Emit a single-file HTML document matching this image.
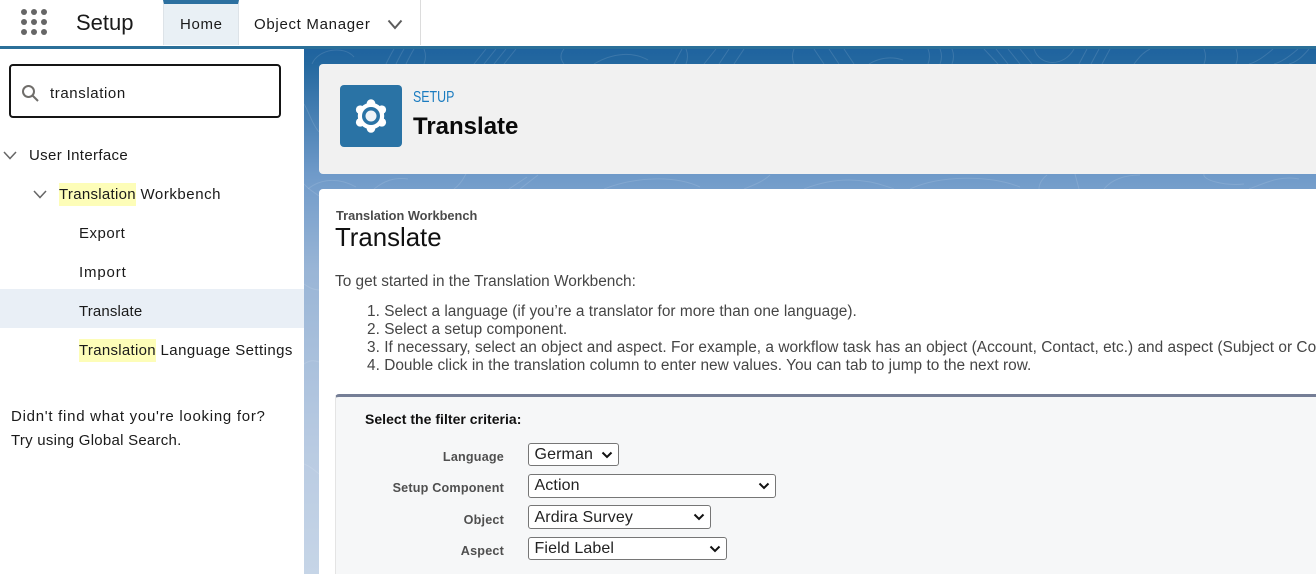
<!DOCTYPE html>
<html><head><meta charset="utf-8"><title>Translate</title>
<style>
html,body{margin:0;padding:0;width:1316px;height:574px;overflow:hidden;background:#fff}
#p{position:absolute;left:0;top:0;width:1316px;height:574px;overflow:hidden;background:#fff;font-family:"Liberation Sans",sans-serif;color:#181818}
.a{position:absolute;white-space:nowrap}
.nav{font-size:15px;line-height:20px;letter-spacing:.35px;color:#1a1a1a}
.hl{background:#fdfdb8;padding:3px 0}
.b{font-size:15.4px;line-height:18px;color:#454545}
.lab{font-size:12.6px;font-weight:bold;color:#4f4f4f;line-height:14px;text-align:right;right:0;letter-spacing:.2px}
.sel{position:absolute;box-sizing:border-box;background:#fff;border:1px solid #767676;border-radius:3px;font-size:16px;line-height:20px;color:#222;padding-left:5.5px;letter-spacing:.12px;white-space:nowrap}
.sel svg{position:absolute;top:50%;margin-top:-4px}
</style></head><body><div id="p">

<!-- Top bar -->
<svg class="a" style="left:20px;top:8px" width="28" height="28" viewBox="0 0 28 28" fill="#666">
<circle cx="4" cy="4" r="3"/><circle cx="14" cy="4" r="3"/><circle cx="24" cy="4" r="3"/>
<circle cx="4" cy="14" r="3"/><circle cx="14" cy="14" r="3"/><circle cx="24" cy="14" r="3"/>
<circle cx="4" cy="24" r="3"/><circle cx="14" cy="24" r="3"/><circle cx="24" cy="24" r="3"/></svg>
<div class="a" style="left:76px;top:8px;font-size:22px;line-height:30px;color:#1a1a1a">Setup</div>
<div class="a" style="left:163px;top:0;width:76px;height:45px;box-sizing:border-box;background:#e9f0f5;border-top:4px solid #2c70a0;border-left:1px solid #dde3e8;border-right:1px solid #dde3e8"></div>
<div class="a nav" style="left:180px;top:15px;letter-spacing:.65px">Home</div>
<div class="a nav" style="left:254px;top:15px;letter-spacing:.7px">Object Manager</div>
<svg class="a" style="left:387px;top:19px" width="16" height="11" viewBox="0 0 16 11" fill="none" stroke="#5c5c5c" stroke-width="2"><path d="M1.500 1.500 8 9l6.500-7.500"/></svg>
<div class="a" style="left:420px;top:0;width:1px;height:45px;background:#dcdcdc"></div>
<div class="a" style="left:0;top:46px;width:1316px;height:3px;background:#2b7099"></div>

<!-- Sidebar -->
<div class="a" style="left:9px;top:64px;width:272px;height:54px;box-sizing:border-box;border:2px solid #151515;border-radius:4px;background:#fff"></div>
<svg class="a" style="left:21px;top:84px" width="18" height="18" viewBox="0 0 18 18" fill="none" stroke="#706e6b" stroke-width="2"><circle cx="7.500" cy="7.500" r="5.500"/><path d="M11.500 11.500 17 17"/></svg>
<div class="a nav" style="left:50px;top:84px;letter-spacing:.6px">translation</div>

<svg class="a" style="left:3px;top:151px" width="14" height="9" viewBox="0 0 14 9" fill="none" stroke="#666" stroke-width="1.500"><path d="M1 1l6 6.500L13 1"/></svg>
<div class="a nav" style="left:29px;top:146px">User Interface</div>
<svg class="a" style="left:33px;top:190px" width="14" height="9" viewBox="0 0 14 9" fill="none" stroke="#666" stroke-width="1.500"><path d="M1 1l6 6.500L13 1"/></svg>
<div class="a nav" style="left:59px;top:185px"><span class="hl" style="letter-spacing:.3px">Translation</span> <span style="letter-spacing:.55px">Workbench</span></div>
<div class="a nav" style="left:79px;top:224px;letter-spacing:.5px">Export</div>
<div class="a nav" style="left:79px;top:263px;letter-spacing:.85px">Import</div>
<div class="a" style="left:0;top:289px;width:304px;height:39px;background:#e9eff6"></div>
<div class="a nav" style="left:79px;top:302px;letter-spacing:.15px">Translate</div>
<div class="a nav" style="left:79px;top:341px;letter-spacing:.42px"><span class="hl" style="letter-spacing:.3px">Translation</span> Language Settings</div>
<div class="a nav" style="left:11px;top:407px;letter-spacing:.73px">Didn't find what you're looking for?</div>
<div class="a nav" style="left:11px;top:431px;letter-spacing:.25px">Try using Global Search.</div>

<!-- Main background -->
<div class="a" style="left:304px;top:49px;width:1012px;height:525px;background:linear-gradient(180deg,#1f639f 0,#24689f 15px,#6f9ac9 125px,#99b5d6 220px,#b9cbe2 400px,#c6d5e7 525px)"></div>
<svg class="a" style="left:304px;top:49px" width="1012" height="141" viewBox="0 0 1012 141" fill="none" stroke="#fff" stroke-opacity=".12" stroke-width="1">
<path d="M8 15C14 0 40-4 50 8M82 15c3-6 6-12 8-15M92 15c3-6 6-12 8-15M102 15c3-6 6-12 8-15M120 15c2-5 2-10 0-15M170 15l12-15M180 15l12-15M190 15l12-15M200 15l12-15M260 15c-4-5-4-10 0-15M290 15c20-12 40-12 54-4M370 15l8-15M382 15c2-5 2-10 0-15M400 15l12-15M415 15l10-15M430 15l10-15M490 15c-2-5-2-10 0-15M520 15l-10-15M535 15l-10-15M550 15l-10-15M565 15c10-6 22-8 34-4M624 0c2 5 2 10 0 15M636 15c2-5 2-10 0-15M648 15c2-5 2-10 0-15M680 0l14 15M692 0l12 15M704 0l12 15M716 0l12 15M730 0c6 18 30 18 40 0M775 15l8-15M787 15l8-15M798 15l8-15M830 15c6-8 10-12 16-15M900 15c2-5 2-10 0-15M932 0c2 5 2 10 0 15M945 15c8-2 16-8 24-15M970 15c8-2 16-8 24-15M985 15c8-2 14-8 20-15"/>
<path d="M4 140c12-10 30-12 48-2M70 140c10-8 20-12 34-10M150 140c8-6 10-12 12-15M205 140l18-12M216 140l18-14M300 140c30-12 70-14 96-2M440 140c10-4 20-8 26-14M500 140c30-12 60-12 90 0M606 140c30-14 80-14 110-2M735 140c0-5 3-10 8-14M775 140l-4-15M800 140c8-10 22-14 36-14M900 125c-2 6 20 12 40 10M945 140c16-6 32-14 50-10"/></svg>
<svg class="a" style="left:304px;top:64px" width="15" height="510" viewBox="0 0 15 510" fill="none" stroke="#fff" stroke-opacity=".12" stroke-width="1">
<path d="M0 40c6 10 8 20 15 28M0 120c5 6 10 8 15 12M0 220c6 4 10 6 15 6M0 300c6-4 10-4 15-2M0 400c6 2 10 6 15 10"/></svg>

<!-- Header card -->
<div class="a" style="left:319px;top:64px;width:1010px;height:110px;background:#f1f1f1;border-radius:4px"></div>
<div class="a" style="left:340px;top:85px;width:62px;height:62px;background:#2a73a5;border-radius:4px"></div>
<svg class="a" style="left:354px;top:98px" width="34" height="36" viewBox="0 0 34 36">
<g fill="#fff"><circle cx="17" cy="18" r="13.200"/>
<circle cx="17" cy="5.500" r="4.300"/><circle cx="17" cy="30.500" r="4.300"/>
<circle cx="6.200" cy="11.700" r="4.300"/><circle cx="27.800" cy="11.700" r="4.300"/>
<circle cx="6.200" cy="24.300" r="4.300"/><circle cx="27.800" cy="24.300" r="4.300"/></g>
<circle cx="17" cy="18" r="9" fill="#2a73a5"/><circle cx="17" cy="18" r="5.500" fill="#eef3f7"/></svg>
<div class="a" style="left:413px;top:89px;font-size:15.500px;line-height:18px;color:#1b7cc0;transform:scaleX(.8);transform-origin:left center">SETUP</div>
<div class="a" style="left:413px;top:112px;font-size:24px;line-height:30px;font-weight:bold;color:#0a0a0a">Translate</div>

<!-- Content card -->
<div class="a" style="left:319px;top:189px;width:1010px;height:400px;background:#fff;border-radius:4px"></div>
<div class="a" style="left:336px;top:209px;font-size:12.800px;line-height:14px;font-weight:bold;color:#4a4a4a">Translation Workbench</div>
<div class="a" style="left:335px;top:222px;font-size:25.800px;line-height:32px;color:#111">Translate</div>
<div class="a b" style="left:335px;top:273px">To get started in the Translation Workbench:</div>
<div class="a b" style="left:367px;top:303px;letter-spacing:.03px">1. Select a language (if you’re a translator for more than one language).</div>
<div class="a b" style="left:367px;top:321px;letter-spacing:.03px">2. Select a setup component.</div>
<div class="a b" style="left:367px;top:339px;letter-spacing:.03px">3. If necessary, select an object and aspect. For example, a workflow task has an object (Account, Contact, etc.) and aspect (Subject or Comments).</div>
<div class="a b" style="left:367px;top:357px;letter-spacing:.03px">4. Double click in the translation column to enter new values. You can tab to jump to the next row.</div>

<!-- Filter panel -->
<div class="a" style="left:335px;top:394px;width:1000px;height:180px;box-sizing:border-box;background:#f6f7f8;border-top:3px solid #757e96;border-left:1px solid #e4e4e4;border-radius:4px 0 0 0"></div>
<div class="a" style="left:365px;top:412px;font-size:14px;line-height:14px;font-weight:bold;color:#111;letter-spacing:.03px">Select the filter criteria:</div>
<div class="a" style="left:330px;top:0;width:174px;height:574px">
<div class="a lab" style="top:450px">Language</div>
<div class="a lab" style="top:481px">Setup Component</div>
<div class="a lab" style="top:513px">Object</div>
<div class="a lab" style="top:544px">Aspect</div>
</div>
<div class="sel" style="left:528px;top:443px;width:91px;height:23px;line-height:21px">German<svg style="right:5px" width="12" height="8" viewBox="0 0 12 8" fill="none" stroke="#111" stroke-width="2"><path d="M1.500 1.500 6 6l4.500-4.500"/></svg></div>
<div class="sel" style="left:528px;top:474px;width:248px;height:24px;line-height:21px">Action<svg style="right:5px" width="12" height="8" viewBox="0 0 12 8" fill="none" stroke="#111" stroke-width="2"><path d="M1.500 1.500 6 6l4.500-4.500"/></svg></div>
<div class="sel" style="left:528px;top:505px;width:183px;height:24px;line-height:23px">Ardira Survey<svg style="right:5px" width="12" height="8" viewBox="0 0 12 8" fill="none" stroke="#111" stroke-width="2"><path d="M1.500 1.500 6 6l4.500-4.500"/></svg></div>
<div class="sel" style="left:528px;top:537px;width:199px;height:23px;line-height:21px">Field Label<svg style="right:5px" width="12" height="8" viewBox="0 0 12 8" fill="none" stroke="#111" stroke-width="2"><path d="M1.500 1.500 6 6l4.500-4.500"/></svg></div>

</div></body></html>
